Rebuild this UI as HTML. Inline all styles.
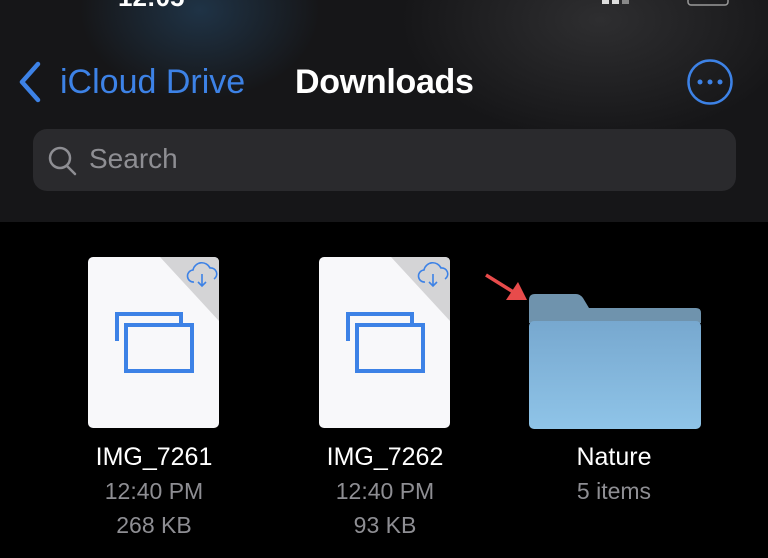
<!DOCTYPE html>
<html><head><style>
body{margin:0;width:768px;height:558px;overflow:hidden;background:#000;font-family:"Liberation Sans",sans-serif;position:relative}
.hdr{position:absolute;left:0;top:0;width:768px;height:222px;background:radial-gradient(ellipse 120px 90px at 200px 10px,#1f3346,transparent),radial-gradient(ellipse 200px 120px at 600px 20px,#2e2e30,transparent),#161618}
.t{position:absolute;white-space:nowrap}
.lbl{position:absolute;width:200px;text-align:center;color:#fff;font-size:25px}
.sub{position:absolute;width:200px;text-align:center;color:#8e8e93;font-size:23px}
</style></head><body>
<div class="hdr"></div>
<div class="t" style="left:118px;top:-18px;color:#fff;font-size:26px;font-weight:bold">12:05</div>
<svg style="position:absolute;left:0;top:0" width="768" height="222">
<path d="M38 64 L22 82 L38 100" fill="none" stroke="#3d82e6" stroke-width="4.5" stroke-linecap="round" stroke-linejoin="round"/>
<circle cx="710" cy="82" r="21.5" fill="none" stroke="#3d82e6" stroke-width="2.5"/>
<circle cx="700" cy="82" r="2.5" fill="#3d82e6"/><circle cx="710" cy="82" r="2.5" fill="#3d82e6"/><circle cx="720" cy="82" r="2.5" fill="#3d82e6"/>
<rect x="33" y="129" width="703" height="62" rx="14" fill="#2a2a2d"/>
<circle cx="60" cy="158" r="10" fill="none" stroke="#8e8e93" stroke-width="2.5"/>
<path d="M67 166 L75 174" stroke="#8e8e93" stroke-width="2.5" stroke-linecap="round"/>
<rect x="602" y="0" width="7" height="4" fill="#ddd"/><rect x="612" y="0" width="7" height="4" fill="#ddd"/><rect x="622" y="0" width="7" height="4" fill="#888"/>
<rect x="688" y="-6" width="40" height="11" rx="3" fill="none" stroke="#999" stroke-width="1.5"/>
</svg>
<div class="t" style="left:60px;top:63px;color:#3d82e6;font-size:34px">iCloud Drive</div>
<div class="t" style="left:295px;top:63px;color:#fff;font-size:34px;font-weight:bold;letter-spacing:-0.3px">Downloads</div>
<div class="t" style="left:89px;top:143px;color:#8e8e93;font-size:28px">Search</div>

<svg style="position:absolute;left:0;top:230px" width="768" height="210">
<g id="f">
<rect x="88" y="27" width="131" height="171" rx="5" fill="#f8f8fa"/>
<path d="M160 27 L214 27 Q219 27 219 32 L219 91 Z" fill="#d4d4d6"/>
<path d="M194 52 a6 6 0 0 1 -1 -12 a9 9 0 0 1 17 -2 a6 6 0 0 1 4 11" fill="none" stroke="#3d82e6" stroke-width="1.6"/>
<path d="M202 44 V56 M198 52 L202 56 L206 52" fill="none" stroke="#3d82e6" stroke-width="1.6"/>
<path d="M117 111 V84 H181 V93" fill="none" stroke="#3d82e6" stroke-width="4"/>
<rect x="126" y="95" width="66" height="46" fill="none" stroke="#3d82e6" stroke-width="4"/>
</g>
<use href="#f" x="231"/>
<path d="M535 64 H576 Q580 64 583 68 L589 78 H696 Q701 78 701 83 V93 H529 V70 Q529 64 535 64Z" fill="#6f93ad"/>
<defs><linearGradient id="g" x1="0" y1="0" x2="0" y2="1"><stop offset="0" stop-color="#77a8cf"/><stop offset="1" stop-color="#8fc4e8"/></linearGradient></defs>
<rect x="529" y="91" width="172" height="108" rx="5" fill="url(#g)"/>
<path d="M486 45 L515 63" stroke="#e84b4b" stroke-width="3.5"/>
<path d="M527 70 L506 70 L518 52 Z" fill="#e84b4b"/>
</svg>

<div class="lbl" style="left:54px;top:443px">IMG_7261</div>
<div class="sub" style="left:54px;top:478px">12:40 PM</div>
<div class="sub" style="left:54px;top:512px">268 KB</div>
<div class="lbl" style="left:285px;top:443px">IMG_7262</div>
<div class="sub" style="left:285px;top:478px">12:40 PM</div>
<div class="sub" style="left:285px;top:512px">93 KB</div>
<div class="lbl" style="left:514px;top:443px">Nature</div>
<div class="sub" style="left:514px;top:478px">5 items</div>
</body></html>
